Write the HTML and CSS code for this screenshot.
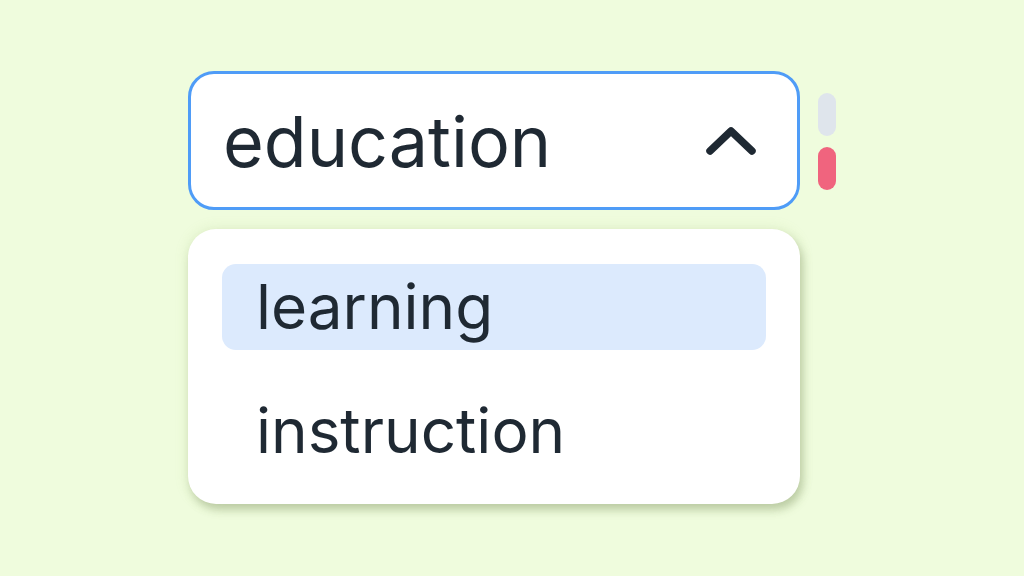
FILE: index.html
```html
<!DOCTYPE html>
<html>
<head>
<meta charset="utf-8">
<link rel="stylesheet" href="styles.css">
</head>
<body>
<div class="stage">
  <div class="combo">
    <div class="field-row">
      <div class="field">
        <span class="value">education</span>
        <svg class="chevron" width="54" height="34" viewBox="0 0 54 34">
          <path d="M6 27 L27 7 L48 27" fill="none" stroke="#1f2933" stroke-width="7.5" stroke-linecap="round" stroke-linejoin="round"/>
        </svg>
      </div>
      <div class="indicators">
        <span class="ind ind-gray"></span>
        <span class="ind ind-red"></span>
      </div>
    </div>
    <div class="menu">
      <div class="option active">learning</div>
      <div class="option">instruction</div>
    </div>
  </div>
</div>
</body>
</html>
```

FILE: styles.css
```css
html, body {
  margin: 0;
  padding: 0;
}
body {
  width: 1024px;
  height: 576px;
  background: #effcdd;
  font-family: "Inter", "Noto Sans", sans-serif;
  color: #1f2933;
  overflow: hidden;
}
.stage {
  padding: 71px 0 0 188px;
}
.combo {
  width: 612px;
}
.field-row {
  display: flex;
  align-items: flex-start;
  gap: 18px;
  width: 648px;
}
.field {
  box-sizing: border-box;
  width: 612px;
  height: 139px;
  border: 3px solid #4f9cf7;
  border-radius: 26px;
  background: #ffffff;
  display: flex;
  align-items: center;
  justify-content: space-between;
  padding: 0 39px 0 32px;
  flex-shrink: 0;
}
.value {
  font-size: 70px;
  line-height: 1;
  position: relative;
  top: 1px;
}
.chevron {
  display: block;
}
.indicators {
  display: flex;
  flex-direction: column;
  gap: 11px;
  padding-top: 22px;
}
.ind {
  display: block;
  width: 18px;
  height: 43px;
  border-radius: 9px;
}
.ind-gray { background: #dfe5ec; }
.ind-red { background: #f0647e; }
.menu {
  box-sizing: border-box;
  margin-top: 19px;
  width: 612px;
  height: 275px;
  background: #ffffff;
  border-radius: 28px;
  padding: 35px 34px 0 34px;
  box-shadow: 3px 6px 8px rgba(110, 130, 80, 0.35), 0 0 14px rgba(150, 180, 100, 0.18);
  display: flex;
  flex-direction: column;
  gap: 38px;
}
.option {
  height: 86px;
  box-sizing: border-box;
  padding-left: 34px;
  font-size: 62px;
  line-height: 86px;
  border-radius: 14px;
}
.option.active {
  background: #dceafd;
}
```
